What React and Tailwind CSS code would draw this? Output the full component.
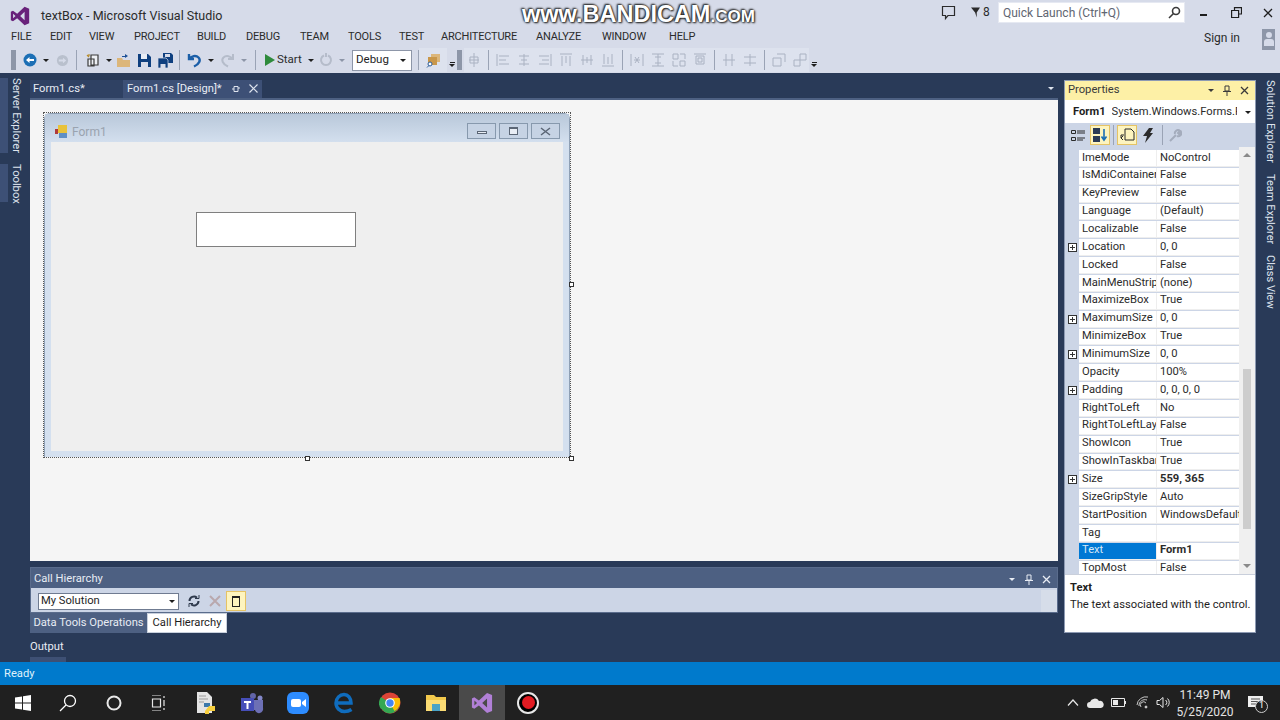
const menus = [
  ["FILE", "w-[39px]"],
  ["EDIT", "w-[39px]"],
  ["VIEW", "w-[45px]"],
  ["PROJECT", "w-[63px]"],
  ["BUILD", "w-[49px]"],
  ["DEBUG", "w-[54px]"],
  ["TEAM", "w-[48px]"],
  ["TOOLS", "w-[51px]"],
  ["TEST", "w-[42px]"],
  ["ARCHITECTURE", "w-[95px]"],
  ["ANALYZE", "w-[66px]"],
  ["WINDOW", "w-[67px]"],
  ["HELP", "w-[40px]"],
];

const props = [
  ["ImeMode", "NoControl"],
  ["IsMdiContainer", "False"],
  ["KeyPreview", "False"],
  ["Language", "(Default)"],
  ["Localizable", "False"],
  ["Location", "0, 0", true],
  ["Locked", "False"],
  ["MainMenuStrip", "(none)"],
  ["MaximizeBox", "True"],
  ["MaximumSize", "0, 0", true],
  ["MinimizeBox", "True"],
  ["MinimumSize", "0, 0", true],
  ["Opacity", "100%"],
  ["Padding", "0, 0, 0, 0", true],
  ["RightToLeft", "No"],
  ["RightToLeftLayout", "False"],
  ["ShowIcon", "True"],
  ["ShowInTaskbar", "True"],
  ["Size", "559, 365", true, true],
  ["SizeGripStyle", "Auto"],
  ["StartPosition", "WindowsDefaultLocation"],
  ["Tag", ""],
  ["Text", "Form1", false, true, true],
  ["TopMost", "False"],
];

function VsLogo({ size = 20, color = "#68217a" }) {
  return (
    <svg width={size} height={size} viewBox="0 0 24 24">
      <path
        fill={color}
        fillRule="evenodd"
        d="M17.5 1 23 3.2v17.6L17.5 23 8.6 14.6 3.6 18.4 1 17V7l2.6-1.4 5 3.8zM17.5 7l-5.3 5 5.3 5zM3.7 9.2v5.600L6.600 12z"
      />
    </svg>
  );
}

function Caret({ color = "#1e1e1e" }) {
  return <span className="block h-0 w-0 border-x-[3px] border-t-[3px] border-x-transparent" style={{ borderTopColor: color }} />;
}

function Grip() {
  return <span className="block h-[20px] w-[5px] bg-[radial-gradient(#8d96a8_1px,transparent_1px)] bg-[length:2px_2px]" />;
}

function Sep() {
  return <span className="block h-[20px] w-px bg-[#9aa3b5]" />;
}

function Overflow() {
  return (
    <span className="flex flex-col items-center gap-[1px] pt-[8px]">
      <span className="block h-px w-[5px] bg-[#1e1e1e]" />
      <Caret />
    </span>
  );
}

// disabled layout-toolbar glyph
function AlignIcon({ d }) {
  return (
    <svg width="14" height="14" viewBox="0 0 14 14" fill="none" stroke="#aab2c2" strokeWidth="1">
      <path d={d} />
    </svg>
  );
}

function Toolbar() {
  return (
    <div className="flex h-[24px] items-center text-[11.500px]">
      <span className="ml-[11px] w-[9px]"><Grip /></span>
      <span className="flex w-[20px] justify-center">
        <svg width="14" height="14" viewBox="0 0 14 14">
          <circle cx="7" cy="7" r="6.500" fill="#1c6fb5" />
          <path d="M3 7l3.500-3v2H11v2H6.500v2z" fill="#fff" />
        </svg>
      </span>
      <span className="flex w-[12px] justify-center"><Caret /></span>
      <span className="flex w-[20px] justify-center">
        <svg width="13" height="13" viewBox="0 0 14 14">
          <circle cx="7" cy="7" r="6" fill="#b9c0cd" />
          <path d="M11 7L7.500 4v2H3v2h4.500v2z" fill="#d6dbe9" />
        </svg>
      </span>
      <span className="ml-[4px] mr-[6px]"><Sep /></span>
      <span className="flex w-[20px] justify-center">
        <svg width="15" height="15" viewBox="0 0 15 15" fill="none" stroke="#3a3a3a" strokeWidth="1.200">
          <path d="M5 2h7v10H5zM2 6h6v7H2z" fill="#eef0f5" />
          <path d="M1 2l2 2M3 1v2" stroke="#b58a2a" />
        </svg>
      </span>
      <span className="flex w-[11px] justify-center"><Caret /></span>
      <span className="flex w-[20px] justify-center">
        <svg width="16" height="15" viewBox="0 0 16 15">
          <path d="M1 5h5l1 2h7v7H1z" fill="#dcb67a" />
          <path d="M9 1l3 2-3 2z M6 3h4v1H6z" fill="#1c4f95" />
        </svg>
      </span>
      <span className="flex w-[21px] justify-center">
        <svg width="13" height="13" viewBox="0 0 13 13">
          <path d="M0 0h10l3 3v10H0z" fill="#0e3f7f" />
          <path d="M3 0h6v5H3z" fill="#e8ecf4" />
          <path d="M3 8h7v5H3z" fill="#d6dbe9" />
        </svg>
      </span>
      <span className="flex w-[21px] justify-center">
        <svg width="15" height="15" viewBox="0 0 15 15">
          <path d="M5 0h8l2 2v8H5z" fill="#0e3f7f" />
          <path d="M0 5h8l2 2v8H0z" fill="#0e3f7f" stroke="#d6dbe9" strokeWidth=".7" />
          <path d="M2.500 11h5v4h-5z M7 1h5v3H7z" fill="#d6dbe9" />
        </svg>
      </span>
      <span className="ml-[3px] mr-[6px]"><Sep /></span>
      <span className="flex w-[17px] justify-center">
        <svg width="15" height="15" viewBox="0 0 15 15" fill="none" stroke="#1c5fa8" strokeWidth="2.400">
          <path d="M2 1v5h5M2.500 6C4 3 9 2 11.500 4.500s1 6.500-4.500 9" />
        </svg>
      </span>
      <span className="flex w-[16px] justify-center"><Caret /></span>
      <span className="flex w-[17px] justify-center">
        <svg width="15" height="15" viewBox="0 0 15 15" fill="none" stroke="#b5bcca" strokeWidth="2">
          <path d="M13 1v5H8M12.500 6C11 3 6 2 3.500 4.500s-1 6.500 4.500 9" />
        </svg>
      </span>
      <span className="flex w-[16px] justify-center"><Caret color="#8d96a8" /></span>
      <span className="ml-[3px] mr-[9px]"><Sep /></span>
      <svg width="10" height="12" viewBox="0 0 10 12"><path d="M0 0l10 6-10 6z" fill="#2e8b3c" /></svg>
      <span className="ml-[2px] w-[29px] text-[#2b2b2b]">Start</span>
      <span className="flex w-[9px] justify-center"><Caret /></span>
      <span className="ml-[3px] flex w-[16px] justify-center">
        <svg width="14" height="14" viewBox="0 0 14 14" fill="none" stroke="#b5bcca" strokeWidth="2">
          <path d="M9 2.500a5 5 0 1 1-4 0M7 0v4" />
        </svg>
      </span>
      <span className="flex w-[16px] justify-center"><Caret color="#8d96a8" /></span>
      <div className="ml-[2px] flex h-[21px] w-[60px] items-center justify-between border border-[#8d96a8] bg-white pl-[3px] pr-[5px]">
        <span className="text-[#1e1e1e]">Debug</span>
        <Caret />
      </div>
      <span className="ml-[6px]"><Sep /></span>
      <span className="flex h-[24px] w-[28px] items-center justify-center bg-[#dde2ee]">
        <svg width="15" height="15" viewBox="0 0 15 15">
          <path d="M5 1h9v8H5z" fill="#dcb67a" />
          <path d="M2 4h9v8H2z" fill="#c9974a" />
          <circle cx="4" cy="11" r="2" fill="#fff" stroke="#2b5d9b" />
          <path d="M3 12.500L1 14.500" stroke="#2b5d9b" />
        </svg>
      </span>
      <span className="ml-[1px] w-[8px]"><Overflow /></span>
      <span className="ml-[1px] w-[7px]"><Grip /></span>
      <span className="flex h-[24px] items-center gap-[7px] bg-[#dde2ee] pl-[3px] pr-[2px]">
        <AlignIcon d="M7 0v14M2 7h10M3 4h8v6H3z" />
        <Sep />
        <AlignIcon d="M1 1v12M3 3h10M3 7h7M3 11h10" />
        <AlignIcon d="M7 1v12M2 3h10M4 7h6M2 11h10" />
        <AlignIcon d="M13 1v12M1 3h10M4 7h7M1 11h10" />
        <AlignIcon d="M1 1h12M3 3v10M7 3v7M11 3v10" />
        <AlignIcon d="M1 7h12M3 2v10M7 4v6M11 2v10" />
        <AlignIcon d="M1 13h12M3 1v10M7 4v7M11 1v10" />
        <Sep />
        <AlignIcon d="M1 1v12M13 1v12M4 7h6M5 4l4 6M9 4l-4 6" />
        <AlignIcon d="M1 1h12M1 13h12M7 1v12M4 4h6M4 10h6" />
        <AlignIcon d="M1 1h5v5H1zM8 8h5v5H8zM8 1h5v5M1 8v5h5" />
        <AlignIcon d="M3 3h8v8H3zM5 5h4v4H5zM1 1h12" />
        <Sep />
        <AlignIcon d="M1 7h12M4 1v12M10 1v12" />
        <AlignIcon d="M7 1v12M1 4h12M1 10h12" />
        <Sep />
        <AlignIcon d="M1 5h8v8H1zM5 1h8v8" />
        <AlignIcon d="M1 7h6v6H1zM7 1h6v6H7z" />
      </span>
      <span className="ml-[2px]"><Overflow /></span>
    </div>
  );
}

function Header() {
  return (
    <header className="relative h-[73px] shrink-0 bg-[#d6dbe9] text-[12px] text-[#2b2b2b]">
      <div className="flex h-[26px] items-start">
        <div className="ml-[10px] mt-[6px]"><VsLogo /></div>
        <span className="ml-[11px] mt-[7px] text-[12.500px] leading-[17px]">textBox - Microsoft Visual Studio</span>
        <div className="ml-auto flex items-center">
          <svg className="mt-[2px]" width="15" height="16" viewBox="0 0 15 16" fill="none" stroke="#2b2b2b" strokeWidth="1.200">
            <path d="M1.500 1.500h12v9H7l-2.500 3v-3h-3z" />
          </svg>
          <svg className="ml-[15px] mt-[2px]" width="9" height="13" viewBox="0 0 11 14"><path d="M0 1h11L7 7v6L5 7z" fill="#2b2b2b" /></svg>
          <span className="ml-[3px] w-[15px] text-[#2b2b2b]">8</span>
          <div className="mt-[2px] flex h-[21px] w-[187px] items-center justify-between border border-[#e6e9f2] bg-white pl-[4px] pr-[3px]">
            <span className="text-[#5f6672]">Quick Launch (Ctrl+Q)</span>
            <svg width="13" height="13" viewBox="0 0 13 13" fill="none" stroke="#3a3a3a" strokeWidth="1.600">
              <circle cx="8" cy="5" r="3.500" /><path d="M5.500 7.500L1 12" />
            </svg>
          </div>
          <span className="ml-[15px] mt-[6px] block h-[2px] w-[7px] bg-[#1e1e1e]" />
          <svg className="ml-[24px] mt-[2px]" width="11" height="11" viewBox="0 0 11 11" fill="none" stroke="#1e1e1e" strokeWidth="1.200">
            <path d="M3.500 3V.6h7v6.400H8M.6 3.500h7v7h-7z" />
          </svg>
          <svg className="ml-[21px] mr-[7px] mt-[2px]" width="10" height="10" viewBox="0 0 10 10" stroke="#1e1e1e" strokeWidth="1.300">
            <path d="M1 1l8 8M9 1l-8 8" />
          </svg>
        </div>
      </div>
      <div className="flex h-[22px] items-center pl-[11px] text-[11px] tracking-[-0.2px]">
        {menus.map(([m, w]) => (
          <span key={m} className={w}>{m}</span>
        ))}
        <span className="ml-auto mt-[2px] text-[12px] tracking-normal">Sign in</span>
        <span className="ml-[22px] mr-[5px] mt-[4px] flex h-[21px] w-[13px] flex-col items-center bg-[#8d96a8]">
          <span className="mt-[3px] block h-[6px] w-[6px] rounded-full bg-[#d6dbe9]" />
          <span className="mt-[1px] block h-[7px] w-[10px] rounded-t-[3px] bg-[#d6dbe9]" />
        </span>
      </div>
      <Toolbar />
      <div className="pointer-events-none absolute left-[522px] top-[1px] whitespace-nowrap font-['Liberation_Sans',sans-serif] text-[23.500px] font-bold leading-[27px] text-white [text-shadow:0_0_2px_#222,1px_1px_2px_#222,-1px_-1px_2px_#222]">
        www.BANDICAM<span className="text-[17px]">.COM</span>
      </div>
    </header>
  );
}

function SideTab({ children, className = "" }) {
  return <span className={"whitespace-nowrap [writing-mode:vertical-rl] " + className}>{children}</span>;
}

function FormDesigner() {
  return (
    <div className="relative ml-[13px] mt-[12px] h-[346px] w-[528px] border border-dotted border-[#555]">
      <div className="flex h-full flex-col rounded-t-[6px] border border-b-0 border-[#8fa0b5] bg-[#d4e0ef]">
        <div className="flex h-[28px] shrink-0 items-center bg-gradient-to-b from-[#b9c8da] to-[#d3dfee] pl-[10px] pt-[7px] text-[#9aa3af]">
          <svg width="13" height="13" viewBox="0 0 13 13">
            <path d="M3 0h9v8H3z" fill="#e8c23a" />
            <path d="M0 4h3v5H0z" fill="#b03a3a" />
            <path d="M4 8h8v5H4z" fill="#5f8fc5" />
          </svg>
          <span className="ml-[4px] mt-[1px] text-[12px]">Form1</span>
          <div className="ml-auto mr-[9px] flex gap-[3px]">
            <span className="flex h-[16px] w-[29px] items-center justify-center border border-[#8799ad] bg-[#c6d3e4]">
              <span className="mt-[3px] block h-[3px] w-[10px] border border-[#5b6675] bg-[#e8edf4]" />
            </span>
            <span className="flex h-[16px] w-[29px] items-center justify-center border border-[#8799ad] bg-[#c6d3e4]">
              <span className="block h-[8px] w-[9px] border border-t-2 border-[#5b6675] bg-[#e8edf4]" />
            </span>
            <span className="flex h-[16px] w-[29px] items-center justify-center border border-[#8799ad] bg-[#c6d3e4]">
              <svg width="11" height="9" viewBox="0 0 11 9" stroke="#5b6675" strokeWidth="1.500"><path d="M1 1l9 7M10 1l-9 7" /></svg>
            </span>
          </div>
        </div>
        <div className="mx-[6px] mb-[6px] flex-1 overflow-hidden bg-[#efefef]">
          <div className="ml-[145px] mt-[70px] h-[35px] w-[160px] border border-[#7f7f7f] bg-white" />
        </div>
      </div>
      <span className="absolute right-[-4px] top-[169px] h-[5px] w-[5px] border border-[#333] bg-white" />
      <span className="absolute bottom-[-4px] left-[261px] h-[5px] w-[5px] border border-[#333] bg-white" />
      <span className="absolute bottom-[-4px] right-[-4px] h-[5px] w-[5px] border border-[#333] bg-white" />
    </div>
  );
}

function BottomPanel() {
  return (
    <>
      <div className="mt-[6px] border border-[#5a6c8c] bg-[#4d6082]">
        <div className="flex h-[20px] items-center px-[3px] pt-[2px] text-[#e8ecf4]">
          Call Hierarchy
          <span className="ml-auto"><Caret color="#e8ecf4" /></span>
          <svg className="ml-[10px]" width="8" height="11" viewBox="0 0 8 11" fill="none" stroke="#e8ecf4"><path d="M2 1h4v5H2zM0 6.500h8M4 7v4" /></svg>
          <svg className="ml-[9px] mr-[3px]" width="9" height="9" viewBox="0 0 9 9" stroke="#e8ecf4" strokeWidth="1.300"><path d="M1 1l7 7M8 1l-7 7" /></svg>
        </div>
        <div className="flex h-[24px] items-center bg-[#ccd5e6] pl-[7px] pt-[2px]">
          <div className="flex h-[17px] w-[141px] items-center justify-between border border-[#6f7b91] bg-white pl-[2px] pr-[3px] text-[#1e1e1e]">
            My Solution
            <Caret />
          </div>
          <svg className="ml-[9px]" width="12" height="12" viewBox="0 0 12 12" fill="none" stroke="#2f3a4d" strokeWidth="2">
            <path d="M1.500 6a4.500 4.500 0 0 1 7.500-3.300M10.500 6a4.500 4.500 0 0 1-7.500 3.300" />
            <path d="M7 3.500h4V0M5 8.500H1V12" strokeWidth="1" />
          </svg>
          <svg className="ml-[9px]" width="12" height="12" viewBox="0 0 12 12" stroke="#b9a8ad" strokeWidth="2"><path d="M1 1l10 10M11 1L1 11" /></svg>
          <span className="ml-[5px] flex h-[20px] w-[20px] items-center justify-center border border-[#e5c365] bg-[#fdf4bf]">
            <span className="block h-[11px] w-[8px] border border-t-[2px] border-[#222]" />
          </span>
          <span className="ml-auto h-full w-[16px] bg-[#d6dde9]" />
        </div>
      </div>
      <div className="flex h-[20px] items-stretch">
        <span className="flex w-[117px] items-center justify-center bg-[#4d6082] pt-[1px] text-[#e8ecf4]">Data Tools Operations</span>
        <span className="flex w-[80px] items-center justify-center border border-[#c8d0dd] bg-white text-[#1e1e1e]">Call Hierarchy</span>
      </div>
      <div className="mt-[4px] h-[20px] leading-[20px] text-[#e8ecf4]">Output</div>
      <span className="block h-[5px] w-[36px] bg-[#3e5074]" />
    </>
  );
}

function PropertiesPanel() {
  return (
    <aside className="ml-[6px] mt-[7px] flex h-[553px] w-[192px] shrink-0 flex-col border border-[#8d9ab3] bg-white text-[#2b2b2b]">
      <div className="flex h-[19px] shrink-0 items-center bg-[#fdf0a6] pl-[3px] text-[#3a3a3a]">
        Properties
        <span className="ml-auto"><Caret color="#3a3a3a" /></span>
        <svg className="ml-[9px]" width="8" height="11" viewBox="0 0 8 11" fill="none" stroke="#3a3a3a"><path d="M2 1h4v5H2zM0 6.500h8M4 7v4" /></svg>
        <svg className="ml-[9px] mr-[6px]" width="9" height="9" viewBox="0 0 9 9" stroke="#3a3a3a" strokeWidth="1.300"><path d="M1 1l7 7M8 1l-7 7" /></svg>
      </div>
      <div className="flex h-[23px] shrink-0 items-center bg-white pl-[8px] pr-[4px] pt-[1px]">
        <b className="font-bold text-[#1e1e1e]">Form1</b>
        <span className="ml-[6px] w-[125px] overflow-hidden whitespace-nowrap">System.Windows.Forms.Form</span>
        <span className="ml-auto"><Caret /></span>
      </div>
      <div className="flex h-[24px] shrink-0 items-center bg-[#ccd5e6] pl-[3px]">
        <span className="flex h-[20px] w-[20px] items-center justify-center">
          <svg width="14" height="13" viewBox="0 0 14 13" fill="none" stroke="#2b2b2b">
            <path d="M.5 1.500h4v3h-4zM.5 8.500h4v3h-4zM6 2h8M6 4h8M6 9h8M6 11h6" />
          </svg>
        </span>
        <span className="ml-[2px] flex h-[20px] w-[20px] items-center justify-center border border-[#e5c365] bg-[#fdf4bf]">
          <svg width="15" height="14" viewBox="0 0 15 14">
            <path d="M0 0h7v6H0zM0 8h7v6H0z" fill="#2b3a55" />
            <path d="M11 1v10M8.500 8.500L11 12l2.500-3.500" fill="none" stroke="#1c6fb5" strokeWidth="1.600" />
          </svg>
        </span>
        <span className="ml-[3px]"><Sep /></span>
        <span className="ml-[3px] flex h-[20px] w-[20px] items-center justify-center border border-[#e5c365] bg-[#fdf4bf]">
          <svg width="15" height="14" viewBox="0 0 15 14" fill="none" stroke="#2b2b2b">
            <path d="M5 1h6l3 3v8H5zM4 7H1v3M1 10l2-2M1 10l2 2" />
          </svg>
        </span>
        <span className="ml-[4px] flex h-[20px] w-[14px] items-center justify-center">
          <svg width="10" height="15" viewBox="0 0 10 15"><path d="M6 0h4L7 5h3L2 15l2-7H0z" fill="#2b2b2b" /></svg>
        </span>
        <span className="ml-[7px]"><Sep /></span>
        <svg className="ml-[6px]" width="13" height="13" viewBox="0 0 13 13" fill="none" stroke="#a4acbc" strokeWidth="2">
          <path d="M1 12l6-6M6 5a3 3 0 0 1 5-3L9 4l1 1 2-2a3 3 0 0 1-4 4" />
        </svg>
      </div>
      <div className="flex min-h-0 flex-1 border-b border-[#c9cfdb]">
        <div className="min-w-0 flex-1 overflow-hidden bg-[#ccd5e6] pt-[2px]">
          {props.map(([name, value, plus, bold, sel]) => (
            <div key={name} className="flex h-[17.870px] items-center pt-[1px]">
              <span className="flex w-[14px] shrink-0 justify-center">
                {plus && (
                  <span className="relative block h-[9px] w-[9px] border border-[#333] bg-white">
                    <span className="absolute left-[1px] top-[3px] h-px w-[5px] bg-[#333]" />
                    <span className="absolute left-[3px] top-[1px] h-[5px] w-px bg-[#333]" />
                  </span>
                )}
              </span>
              <span className={"flex h-full w-[78px] shrink-0 items-center overflow-hidden whitespace-nowrap border-b border-r border-[#eeeeee] pl-[3px] " + (sel ? "bg-[#0078d4] text-[#d7e9f7]" : "bg-white")}>
                {name}
              </span>
              <span className={"flex h-full flex-1 items-center overflow-hidden whitespace-nowrap border-b border-[#eeeeee] bg-white pl-[3px] " + (bold ? "font-bold" : "")}>
                {value}
              </span>
            </div>
          ))}
        </div>
        <div className="relative w-[16px] shrink-0 bg-[#f0f0f0]">
          <span className="absolute left-[4px] top-[6px] h-0 w-0 border-x-[4px] border-b-[4px] border-x-transparent border-b-[#8a8a8a]" />
          <span className="absolute left-[4px] top-[222px] h-[160px] w-[8px] bg-[#cdcdcd]" />
          <span className="absolute bottom-[6px] left-[4px] h-0 w-0 border-x-[4px] border-t-[4px] border-x-transparent border-t-[#8a8a8a]" />
        </div>
      </div>
      <div className="h-[57px] shrink-0 bg-white px-[5px] pt-[4px] text-[#1e1e1e]">
        <div className="h-[17px] font-bold leading-[17px]">Text</div>
        <div className="whitespace-nowrap leading-[17px]">The text associated with the control.</div>
      </div>
    </aside>
  );
}

function Taskbar() {
  const slot = "flex h-[35px] w-[46px] items-center justify-center";
  return (
    <footer className="flex h-[35px] shrink-0 items-center bg-[#202020] text-white">
      <span className="flex h-[35px] w-[45px] items-center justify-center">
        <svg width="16" height="16" viewBox="0 0 16 16" fill="#fff"><path d="M0 2.500l7-1v6H0zM8 1.300L16 0v7.500H8zM0 8.500h7v6l-7-1zM8 8.500h8V16l-8-1.300z" /></svg>
      </span>
      <span className={slot}>
        <svg width="18" height="18" viewBox="0 0 18 18" fill="none" stroke="#fff" strokeWidth="1.300"><circle cx="11" cy="7" r="5.500" /><path d="M7 11l-6 6" /></svg>
      </span>
      <span className={slot}>
        <svg width="16" height="16" viewBox="0 0 16 16" fill="none" stroke="#e8e8e8" strokeWidth="2"><circle cx="8" cy="8" r="6.500" /></svg>
      </span>
      <span className={slot}>
        <svg className="mr-[3px]" width="16" height="16" viewBox="0 0 16 16" fill="none" stroke="#e8e8e8" strokeWidth="1.200"><path d="M1 0h9M1 16h9M1.500 4h8v8h-8zM13 1v2M13 5v6M13 13v2" /></svg>
      </span>
      <span className={slot}>
        <svg width="22" height="24" viewBox="0 0 22 24">
          <path d="M2 1h10l5 5v16H2z" fill="#e4e4e4" />
          <path d="M4 5h7M4 8h9M4 11h5" stroke="#9a9a9a" />
          <path d="M9 12h6v4H9z" fill="#3c78aa" />
          <path d="M14 15h6v5h-6v3h-4v-3z" fill="#f7cf3e" />
        </svg>
      </span>
      <span className={slot}>
        <svg width="24" height="22" viewBox="0 0 24 22">
          <circle cx="13" cy="4" r="3" fill="#6264a7" />
          <circle cx="20" cy="6" r="2.500" fill="#8488c9" />
          <path d="M10 8h13v8a4 4 0 0 1-8 2h-5z" fill="#6d70b5" />
          <path d="M1 6h13v13H1z" fill="#464eb8" />
          <path d="M4 9h7v2H8.500v6h-2v-6H4z" fill="#fff" />
        </svg>
      </span>
      <span className={slot}>
        <svg width="22" height="22" viewBox="0 0 22 22">
          <rect width="22" height="22" rx="6" fill="#2d8cff" />
          <rect x="4" y="7" width="10" height="8" rx="2" fill="#fff" />
          <path d="M15 10l4-3v8l-4-3z" fill="#fff" />
        </svg>
      </span>
      <span className={slot}>
        <svg width="20" height="22" viewBox="0 0 20 22" fill="none" stroke="#0f6cbd" strokeWidth="3.500">
          <path d="M3 11h14c0-5-3-8.500-7-8.500S2 6 2 11s4 8.500 8.500 8.500c3 0 5-.7 7-2" />
        </svg>
      </span>
      <span className={slot}>
        <svg width="22" height="22" viewBox="0 0 22 22">
          <circle cx="11" cy="11" r="10.500" fill="#db4437" />
          <path d="M11 11L2 17a10.500 10.500 0 0 1 0-12z" fill="#34a853" />
          <path d="M11 21.500A10.500 10.500 0 0 1 2 16l5-3h4l9.500-.5A10.500 10.500 0 0 1 11 21.500z" fill="#34a853" />
          <path d="M11 6h9.500a10.500 10.500 0 0 1-5 13l-3.500-6z" fill="#fbbc05" />
          <circle cx="11" cy="11" r="4.800" fill="#fff" />
          <circle cx="11" cy="11" r="3.700" fill="#4285f4" />
        </svg>
      </span>
      <span className={slot}>
        <svg width="20" height="20" viewBox="0 0 20 20">
          <path d="M0 2h8l2 2h10v14H0z" fill="#f2c94c" />
          <path d="M0 7h20v11H0z" fill="#fbdc74" />
          <path d="M6 11h8v7H6z" fill="#4aa3c7" />
        </svg>
      </span>
      <span className="flex h-[35px] w-[46px] items-center justify-center bg-[#4a4a4a]">
        <VsLogo size={22} color="#b180d7" />
      </span>
      <span className={slot}>
        <span className="flex h-[22px] w-[22px] items-center justify-center rounded-full border-2 border-[#e8e8e8] bg-black">
          <span className="block h-[13px] w-[13px] rounded-full bg-[#e21b22]" />
        </span>
      </span>
      <div className="ml-auto flex items-center">
        <svg width="12" height="7" viewBox="0 0 12 7" fill="none" stroke="#e8e8e8" strokeWidth="1.200"><path d="M1 6.500L6 1l5 5.500" /></svg>
        <svg className="ml-[8px]" width="17" height="10" viewBox="0 0 17 10" fill="#e8e8e8"><path d="M3 10a3 3 0 0 1 0-6 5 5 0 0 1 9-1 3.500 3.500 0 0 1 2 7z" /></svg>
        <svg className="ml-[7px]" width="15" height="9" viewBox="0 0 15 9" fill="none" stroke="#e8e8e8"><path d="M.5.500h13v8H.5z" /><path d="M2 2h5v5H2zM14 3h1v3h-1z" fill="#e8e8e8" stroke="none" /></svg>
        <svg className="ml-[10px]" width="13" height="13" viewBox="0 0 13 13" fill="none" stroke="#c8c8c8"><path d="M1 9a9 9 0 0 1 11-8M3 10a6 6 0 0 1 8-6M5 11a3 3 0 0 1 5-4" /><circle cx="10" cy="11" r="1" fill="#fff" /></svg>
        <svg className="ml-[7px]" width="16" height="13" viewBox="0 0 16 13" fill="none" stroke="#e8e8e8"><path d="M1 4.500h2.500L7 1.500v10l-3.500-3H1zM9.500 4a3 3 0 0 1 0 5M11.500 2.500a5.500 5.500 0 0 1 0 8" /></svg>
        <div className="flex w-[66px] flex-col items-center pt-[2px] text-[12px] leading-[17px] text-[#e4e4e4]">
          <span>11:49 PM</span>
          <span>5/25/2020</span>
        </div>
        <span className="relative ml-[10px] mr-[17px] block h-[14px] w-[15px]">
          <svg width="15" height="14" viewBox="0 0 15 14"><path d="M0 0h15v11H0z" fill="#f0f0f0" /><path d="M3 3h9M3 5.500h9M3 8h9" stroke="#555" /></svg>
          <span className="absolute left-[7px] top-[4px] flex h-[13px] w-[13px] items-center justify-center rounded-full border border-[#cfcfcf] bg-[#202020] text-[9px]">1</span>
        </span>
      </div>
    </footer>
  );
}

export default function App() {
  return (
    <div className="flex h-[720px] w-[1280px] flex-col overflow-hidden bg-[#293a58] font-['Roboto',sans-serif] text-[11.200px]">
      <Header />
      <div className="flex min-h-0 flex-1">
        <div className="relative flex w-[30px] shrink-0 flex-col pt-[5px] text-[#dfe4ee]">
          <div className="flex h-[75px] bg-[linear-gradient(90deg,#3d5076_0_8px,transparent_8px)]">
            <SideTab className="ml-[9px] leading-[14px]">Server Explorer</SideTab>
          </div>
          <div className="mt-[11px] flex h-[38px] bg-[linear-gradient(90deg,#3d5076_0_8px,transparent_8px)]">
            <SideTab className="ml-[9px] leading-[14px]">Toolbox</SideTab>
          </div>
        </div>
        <div className="flex w-[1028px] shrink-0 flex-col pt-[7px]">
          <div className="flex h-[18px] items-stretch text-[#e8ecf4]">
            <span className="flex w-[93px] items-center bg-[#2f4163] pl-[3px]">Form1.cs*</span>
            <span className="flex w-[139px] items-center whitespace-nowrap bg-[#3d5076] pl-[4px]">
              Form1.cs [Design]*
              <svg className="ml-[10px]" width="8" height="8" viewBox="0 0 8 8" fill="none" stroke="#dfe4ee"><path d="M0 4h2M2 1.500h4v5H2zM6 3h2" /></svg>
              <svg className="ml-[9px]" width="9" height="9" viewBox="0 0 9 9" stroke="#dfe4ee" strokeWidth="1.200"><path d="M.5.500l8 8M8.500.500l-8 8" /></svg>
            </span>
            <span className="ml-auto mr-[4px] self-center"><Caret color="#dfe4ee" /></span>
          </div>
          <div className="h-[464px] border-t-2 border-[#4d6082] bg-[#f5f5f5]">
            <FormDesigner />
          </div>
          <BottomPanel />
        </div>
        <PropertiesPanel />
        <div className="ml-[7px] flex w-[17px] flex-col items-start gap-[11px] pt-[7px] text-[11px] leading-[14px] text-[#dfe4ee]">
          <SideTab>Solution Explorer</SideTab>
          <SideTab>Team Explorer</SideTab>
          <SideTab>Class View</SideTab>
        </div>
      </div>
      <div className="flex h-[23px] shrink-0 items-center bg-[#007acc] pl-[4px] pt-[1px] text-[#dff0fb]">Ready</div>
      <Taskbar />
    </div>
  );
}
